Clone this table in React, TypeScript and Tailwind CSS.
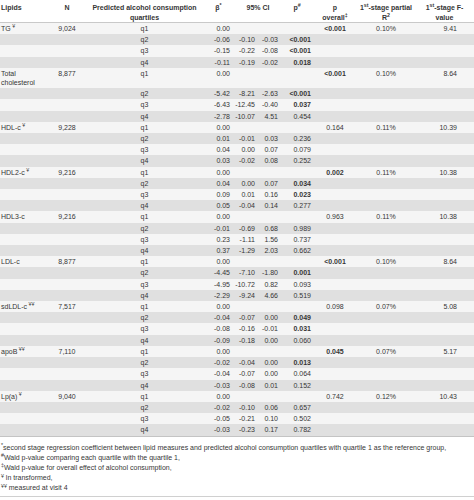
import React from "react";

type Q = { q: string; b: string; lo?: string; hi?: string; p?: string; pb?: boolean };
type Group = {
    name: string;
    mark?: string;
    n: string;
    overall: string;
    overallBold?: boolean;
    r2: string;
    f: string;
    rows: Q[];
};

const groups: Group[] = [
    {
        name: "TG", mark: "¥", n: "9,024", overall: "<0.001", overallBold: true, r2: "0.10%", f: "9.41",
        rows: [
            { q: "q1", b: "0.00" },
            { q: "q2", b: "-0.06", lo: "-0.10", hi: "-0.03", p: "<0.001", pb: true },
            { q: "q3", b: "-0.15", lo: "-0.22", hi: "-0.08", p: "<0.001", pb: true },
            { q: "q4", b: "-0.11", lo: "-0.19", hi: "-0.02", p: "0.018", pb: true },
        ],
    },
    {
        name: "Total cholesterol", n: "8,877", overall: "<0.001", overallBold: true, r2: "0.10%", f: "8.64",
        rows: [
            { q: "q1", b: "0.00" },
            { q: "q2", b: "-5.42", lo: "-8.21", hi: "-2.63", p: "<0.001", pb: true },
            { q: "q3", b: "-6.43", lo: "-12.45", hi: "-0.40", p: "0.037", pb: true },
            { q: "q4", b: "-2.78", lo: "-10.07", hi: "4.51", p: "0.454" },
        ],
    },
    {
        name: "HDL-c", mark: "¥", n: "9,228", overall: "0.164", r2: "0.11%", f: "10.39",
        rows: [
            { q: "q1", b: "0.00" },
            { q: "q2", b: "0.01", lo: "-0.01", hi: "0.03", p: "0.236" },
            { q: "q3", b: "0.04", lo: "0.00", hi: "0.07", p: "0.079" },
            { q: "q4", b: "0.03", lo: "-0.02", hi: "0.08", p: "0.252" },
        ],
    },
    {
        name: "HDL2-c", mark: "¥", n: "9,216", overall: "0.002", overallBold: true, r2: "0.11%", f: "10.38",
        rows: [
            { q: "q1", b: "0.00" },
            { q: "q2", b: "0.04", lo: "0.00", hi: "0.07", p: "0.034", pb: true },
            { q: "q3", b: "0.09", lo: "0.01", hi: "0.16", p: "0.023", pb: true },
            { q: "q4", b: "0.05", lo: "-0.04", hi: "0.14", p: "0.277" },
        ],
    },
    {
        name: "HDL3-c", n: "9,216", overall: "0.963", r2: "0.11%", f: "10.38",
        rows: [
            { q: "q1", b: "0.00" },
            { q: "q2", b: "-0.01", lo: "-0.69", hi: "0.68", p: "0.989" },
            { q: "q3", b: "0.23", lo: "-1.11", hi: "1.56", p: "0.737" },
            { q: "q4", b: "0.37", lo: "-1.29", hi: "2.03", p: "0.662" },
        ],
    },
    {
        name: "LDL-c", n: "8,877", overall: "<0.001", overallBold: true, r2: "0.10%", f: "8.64",
        rows: [
            { q: "q1", b: "0.00" },
            { q: "q2", b: "-4.45", lo: "-7.10", hi: "-1.80", p: "0.001", pb: true },
            { q: "q3", b: "-4.95", lo: "-10.72", hi: "0.82", p: "0.093" },
            { q: "q4", b: "-2.29", lo: "-9.24", hi: "4.66", p: "0.519" },
        ],
    },
    {
        name: "sdLDL-c", mark: "¥¥", n: "7,517", overall: "0.098", r2: "0.07%", f: "5.08",
        rows: [
            { q: "q1", b: "0.00" },
            { q: "q2", b: "-0.04", lo: "-0.07", hi: "0.00", p: "0.049", pb: true },
            { q: "q3", b: "-0.08", lo: "-0.16", hi: "-0.01", p: "0.031", pb: true },
            { q: "q4", b: "-0.09", lo: "-0.18", hi: "0.00", p: "0.060" },
        ],
    },
    {
        name: "apoB", mark: "¥¥", n: "7,110", overall: "0.045", overallBold: true, r2: "0.07%", f: "5.17",
        rows: [
            { q: "q1", b: "0.00" },
            { q: "q2", b: "-0.02", lo: "-0.04", hi: "0.00", p: "0.013", pb: true },
            { q: "q3", b: "-0.04", lo: "-0.07", hi: "0.00", p: "0.064" },
            { q: "q4", b: "-0.03", lo: "-0.08", hi: "0.01", p: "0.152" },
        ],
    },
    {
        name: "Lp(a)", mark: "¥", n: "9,040", overall: "0.742", r2: "0.12%", f: "10.43",
        rows: [
            { q: "q1", b: "0.00" },
            { q: "q2", b: "-0.02", lo: "-0.10", hi: "0.06", p: "0.657" },
            { q: "q3", b: "-0.05", lo: "-0.21", hi: "0.10", p: "0.502" },
            { q: "q4", b: "-0.03", lo: "-0.23", hi: "0.17", p: "0.782" },
        ],
    },
];

const cell = "align-top py-[1px] leading-[9.2px]";
const td = `${cell} whitespace-nowrap`;
const th = "align-top pt-[3px] leading-[9.5px]";

export default function App() {
    let idx = 0;
    return (
        <div className="w-[474px] h-[500px] overflow-hidden bg-white text-[#363636] text-[7px] font-['Liberation_Sans',Arial,sans-serif]">
            <table className="w-[474px] table-fixed border-collapse">
                <colgroup>
                    <col className="w-[47px]" />
                    <col className="w-[40px]" />
                    <col className="w-[115px]" />
                    <col className="w-[31px]" />
                    <col className="w-[24px]" />
                    <col className="w-[23px]" />
                    <col className="w-[33px]" />
                    <col className="w-[44px]" />
                    <col className="w-[58px]" />
                    <col className="w-[59px]" />
                </colgroup>
                <thead>
                    <tr className="border-b border-[#c9c9c9] font-bold">
                        <th className={`${th} text-left pl-[1px] pb-[3px]`}>Lipids</th>
                        <th className={`${th} text-center`}>N</th>
                        <th className={`${th} text-center`}>
                            Predicted alcohol consumption<br />quartiles
                        </th>
                        <th className={`${th} text-center pl-[2px]`}>
                            β<sup>*</sup>
                        </th>
                        <th colSpan={2} className={`${th} text-center pl-[3px]`}>95% CI</th>
                        <th className={`${th} text-center pl-[1px]`}>
                            p<sup>#</sup>
                        </th>
                        <th className={`${th} text-center`}>
                            p<br />overall<sup>‡</sup>
                        </th>
                        <th className={`${th} text-center`}>
                            1<sup>st</sup>-stage partial<br />R<sup>2</sup>
                        </th>
                        <th className={`${th} text-center`}>
                            1<sup>st</sup>-stage F-<br />value
                        </th>
                    </tr>
                </thead>
                <tbody>
                    {groups.map((g) =>
                        g.rows.map((r, i) => {
                            const dark = idx++ % 2 === 1;
                            const last = g.name === "Lp(a)" && i === 3;
                            return (
                                <tr
                                    key={g.name + r.q}
                                    className={`${dark ? "bg-[#e0e0e0]" : "bg-[#f5f5f5]"} ${last ? "border-b border-[#c4c4c4]" : ""}`}
                                >
                                    <td className={`${cell} text-left pl-[1px] pr-[4px]`}>
                                        {i === 0 && (
                                            <>
                                                {g.name}
                                                {g.mark && <sup> {g.mark}</sup>}
                                            </>
                                        )}
                                    </td>
                                    <td className={`${td} text-center`}>{i === 0 ? g.n : ""}</td>
                                    <td className={`${td} text-center`}>{r.q}</td>
                                    <td className={`${td} text-right pr-[3px]`}>{r.b}</td>
                                    <td className={`${td} text-right pr-[2px]`}>{r.lo}</td>
                                    <td className={`${td} text-right pr-[2px]`}>{r.hi}</td>
                                    <td className={`${td} text-right pr-[2px] ${r.pb ? "font-bold" : ""}`}>{r.p}</td>
                                    <td className={`${td} text-center ${g.overallBold ? "font-bold" : ""}`}>
                                        {i === 0 ? g.overall : ""}
                                    </td>
                                    <td className={`${td} text-center`}>{i === 0 ? g.r2 : ""}</td>
                                    <td className={`${td} text-right pr-[17px]`}>{i === 0 ? g.f : ""}</td>
                                </tr>
                            );
                        })
                    )}
                </tbody>
            </table>

            <div className="pl-[1px] pt-[6px] pb-[2px] leading-[10.2px] border-b border-[#d0d0d0]">
                <p>
                    <sup>*</sup>second stage regression coefficient between lipid measures and predicted alcohol
                    consumption quartiles with quartile 1 as the reference group,
                </p>
                <p>
                    <sup>#</sup>Wald p-value comparing each quartile with the quartile 1,
                </p>
                <p>
                    <sup>‡</sup>Wald p-value for overall effect of alcohol consumption,
                </p>
                <p>
                    <sup>¥</sup> ln transformed,
                </p>
                <p>
                    <sup>¥¥</sup> measured at visit 4
                </p>
            </div>
            <p className="pl-[1px] pt-[1px] leading-[10px]">doi:10.1371/journal.pone.0148765.t005</p>
        </div>
    );
}
